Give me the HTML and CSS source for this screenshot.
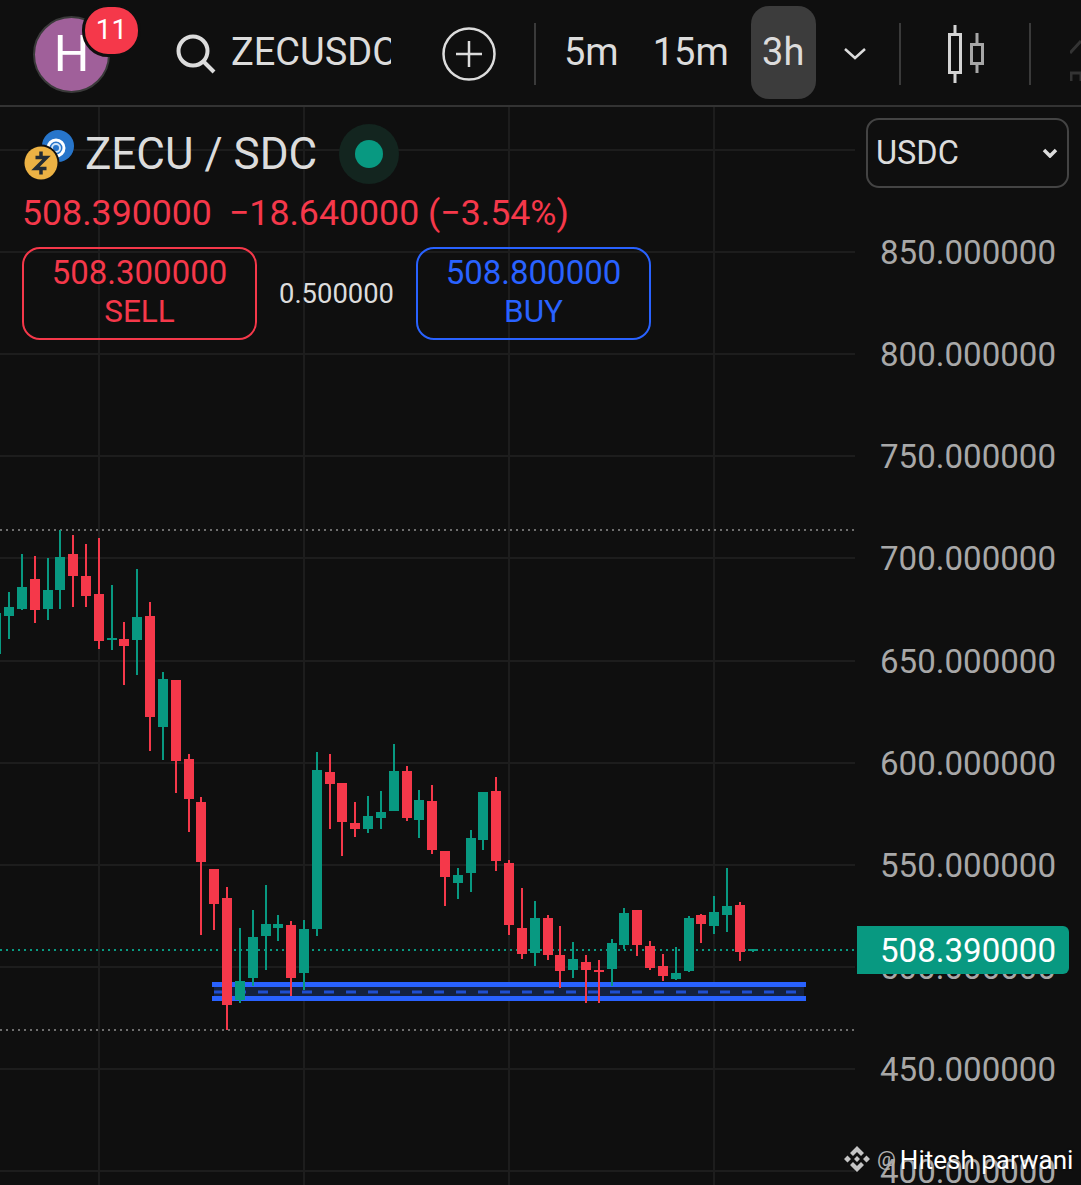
FILE: index.html
```html
<!DOCTYPE html>
<html lang="en">
<head>
<meta charset="utf-8">
<title>ZECU / SDC</title>
<link rel="stylesheet" href="styles.css">
</head>
<body>
<div class="page">
  <svg class="chart" width="1081" height="1185" viewBox="0 0 1081 1185" aria-hidden="true">
    <path class="grid" d="M0 150H855M0 252H855M0 354H855M0 456H855M0 558H855M0 661H855M0 763H855M0 865H855M0 967H855M0 1069H855M0 1171H855M99 107V1185M304 107V1185M509 107V1185M714 107V1185"/>
    <path class="dots-gray" d="M0 530H855M0 1030H855"/>
    <path class="dots-green" d="M0 950H296M312 950H680M696 950H857"/>
    <rect class="band-fill" x="214" y="984" width="590" height="15"/>
    <path class="band-line" d="M212 984.5H806M212 998.500H806"/>
    <path class="band-dash" d="M214 992H804"/>
    <path class="wick-red" d="M35 556V623M73 535V607M86 544V607M99 538V649M124 622V685M150 602V751M176 680V793M189 754V832M201 797V935M214 869V930M227 887V1030M291 921V996M330 754V829M342 783V856M355 802V837M407 766V821M432 785V854M445 851V906M496 777V871M509 860V935M522 888V959M548 915V960M560 926V988M586 955V1003M599 960V1003M637 910V956M650 941V970M663 954V981M701 914V943M740 902V961"/>
    <path class="body-red" d="M35 579V610M73 554V576M86 576V596M99 594V641M124 639V646M150 616V717M176 680V761M189 759V799M201 802V862M214 869V904M227 898V1005M291 925V978M330 772V784M342 783V822M355 823V829M407 771V818M432 801V850M445 851V877M496 791V861M509 863V925M522 928V954M548 918V955M560 955V971M586 962V970M599 970V972M637 910V945M650 946V968M663 966V976M701 915V924M740 905V952"/>
    <path class="wick-green" d="M0 613V654M9 592V639M22 554V610M48 558V620M60 530V609M112 585V650M137 569V675M163 672V760M240 928V1003M253 910V986M266 885V970M278 915V941M304 920V990M317 752V936M368 796V833M381 791V829M394 744V811M419 790V838M458 868V899M471 830V892M483 792V850M535 901V966M573 942V978M612 939V986M624 908V949M676 947V980M689 916V972M714 896V934M727 868V932M753 949V952"/>
    <path class="body-green" d="M9 607V616M22 587V609M48 590V609M60 557V590M112 638V640M137 617V640M163 679V727M240 981V1000M253 937V978M266 924V936M278 924V928M304 929V973M317 770V929M368 816V829M381 812V818M394 771V811M419 800V820M458 875V883M471 838V873M483 792V840M535 918V953M573 959V970M612 943V969M624 913V945M676 973V979M689 918V971M714 912V926M727 906V915M753 949V951"/>
  </svg>

  <header class="topbar">
    <div class="avatar">
      <span class="avatar-letter">H</span>
      <span class="badge">11</span>
    </div>
    <svg class="search-icon" width="42" height="42" viewBox="0 0 42 42">
      <circle cx="18" cy="18" r="14.5"/>
      <path d="M28.5 28.5L39 39"/>
    </svg>
    <div class="symbol-input">ZECUSDC</div>
    <svg class="plus-icon" width="54" height="54" viewBox="0 0 54 54">
      <circle cx="27" cy="27" r="25.5"/>
      <path d="M27 14V40M14 27H40"/>
    </svg>
    <span class="divider divider-first"></span>
    <span class="interval interval-5">5m</span>
    <span class="interval interval-15">15m</span>
    <span class="interval interval-active">3h</span>
    <svg class="chevron" width="24" height="14" viewBox="0 0 24 14">
      <path d="M2 2L12 11L22 2"/>
    </svg>
    <span class="divider divider-second"></span>
    <svg class="candle-icon" width="38" height="58" viewBox="0 0 38 58">
      <path class="candle-a" d="M7 0V9M7 48V58"/>
      <rect class="candle-a" x="1.500" y="9.500" width="11" height="38"/>
      <path class="candle-b" d="M29 8V19M29 39V48"/>
      <rect class="candle-b" x="23.500" y="19.500" width="11" height="19"/>
    </svg>
    <span class="divider divider-third"></span>
    <svg class="faint-icon" width="12" height="50" viewBox="0 0 12 50">
      <path d="M0 22L11 10M1 42H11V55H1Z"/>
    </svg>
  </header>

  <main class="main">
    <section class="info">
      <div class="title-row">
        <svg class="coins" width="52" height="52" viewBox="0 0 52 52">
          <circle class="coin-usdc" cx="34" cy="16" r="16"/>
          <circle class="coin-usdc-ring" cx="32" cy="18" r="8"/>
          <circle class="coin-usdc-inner" cx="32" cy="18" r="4"/>
          <circle class="coin-gap" cx="17" cy="33" r="18.500"/>
          <circle class="coin-zec" cx="17" cy="33" r="16.500"/>
          <path class="coin-zec-mark" d="M17 21.500V27M17 39V44.500M11.500 27.500H22.500L11.500 38.500H22.500"/>
        </svg>
        <h1 class="pair">ZECU / SDC</h1>
        <span class="status"><span class="status-dot"></span></span>
      </div>
      <div class="price-row">
        <span>508.390000</span>
        <span>−18.640000 (−3.54%)</span>
      </div>
      <div class="quote-row">
        <div class="quote quote-sell">
          <span class="quote-price">508.300000</span>
          <span class="quote-label">SELL</span>
        </div>
        <span class="spread">0.500000</span>
        <div class="quote quote-buy">
          <span class="quote-price">508.800000</span>
          <span class="quote-label">BUY</span>
        </div>
      </div>
    </section>

    <aside class="axis">
      <div class="currency">
        <span>USDC</span>
        <svg class="currency-chevron" width="16" height="10" viewBox="0 0 16 10">
          <path d="M2 2L8 8L14 2"/>
        </svg>
      </div>
      <ul class="scale">
        <li>850.000000</li>
        <li>800.000000</li>
        <li>750.000000</li>
        <li>700.000000</li>
        <li>650.000000</li>
        <li>600.000000</li>
        <li>550.000000</li>
        <li>500.000000</li>
        <li>450.000000</li>
        <li>400.000000</li>
      </ul>
    </aside>
  </main>

  <div class="price-tag">508.390000</div>

  <div class="watermark">
    <svg class="binance" width="28" height="28" viewBox="0 0 28 28">
      <path d="M14 1L21 8L18 11L14 7L10 11L7 8ZM14 27L7 20L10 17L14 21L18 17L21 20ZM4.500 10.500L8 14L4.500 17.500L1 14ZM23.500 10.500L27 14L23.500 17.500L20 14ZM14 11L17 14L14 17L11 14Z"/>
    </svg>
    <span class="wm-at">@</span>
    <span class="wm-name">Hitesh parwani</span>
  </div>
</div>
</body>
</html>
```
FILE: styles.css
```css
* { box-sizing: border-box; }
html, body { margin: 0; padding: 0; background: #0f0f0f; }
body { font-family: Roboto, "Liberation Sans", sans-serif; color: #dcdcdc; }

.page {
  position: relative;
  width: 1081px;
  height: 1185px;
  overflow: hidden;
  background: #0f0f0f;
}

/* chart canvas */
.chart { position: absolute; left: 0; top: 0; }
.chart path { fill: none; }
.grid { stroke: #1d1d1d; stroke-width: 2; }
.dots-gray { stroke: #6e6e6e; stroke-width: 2; stroke-dasharray: 2 4; }
.dots-green { stroke: #089981; stroke-width: 2; stroke-dasharray: 2 4; }
.band-fill { fill: #14213f; }
.band-line { stroke: #2962ff; stroke-width: 5; }
.band-dash { stroke: #1f4fd0; stroke-width: 3; stroke-dasharray: 10 12; }
.wick-red { stroke: #f5384a; stroke-width: 2; }
.body-red { stroke: #f5384a; stroke-width: 10; }
.wick-green { stroke: #089981; stroke-width: 2; }
.body-green { stroke: #089981; stroke-width: 10; }

/* top bar */
.topbar {
  position: relative;
  height: 107px;
  display: flex;
  align-items: center;
  padding-left: 33px;
  border-bottom: 2px solid #333;
  background: #0f0f0f;
}
.avatar {
  position: relative;
  flex: none;
  width: 77px;
  height: 77px;
  margin-top: 3px;
  border-radius: 50%;
  background: #a0609a;
  border: 2px solid #3a3a3a;
  display: flex;
  align-items: center;
  justify-content: center;
}
.avatar-letter { font-size: 50px; line-height: 1; color: #fff; }
.badge {
  position: absolute;
  left: 47px;
  top: -14px;
  width: 59px;
  height: 53px;
  border-radius: 26px;
  border: 3px solid #0f0f0f;
  background: #f5384a;
  color: #fff;
  font-size: 28px;
  line-height: 45px;
  text-align: center;
}
.search-icon { flex: none; margin-left: 65px; margin-top: 2px; }
.search-icon circle, .search-icon path { fill: none; stroke: #dcdcdc; stroke-width: 4; }
.symbol-input {
  flex: none;
  width: 160px;
  margin-left: 14px;
  margin-bottom: 2px;
  overflow: hidden;
  white-space: nowrap;
  font-size: 38px;
  color: #dcdcdc;
}
.plus-icon { flex: none; margin-left: 51px; margin-top: 3px; }
.plus-icon circle, .plus-icon path { fill: none; stroke: #dcdcdc; stroke-width: 2.5; }
.divider { flex: none; width: 2px; height: 62px; background: #3a3a3a; margin-top: 2px; }
.divider-first { margin-left: 38px; }
.interval { flex: none; margin-bottom: 2px; font-size: 38px; color: #dcdcdc; }
.interval-5 { margin-left: 28px; }
.interval-15 { margin-left: 34px; }
.interval-active {
  width: 65px;
  height: 93px;
  margin-left: 22px;
  margin-bottom: 0;
  border-radius: 18px;
  background: #3c3c3c;
  text-align: center;
  line-height: 93px;
}
.chevron { flex: none; margin-left: 27px; margin-top: 2px; }
.chevron path { fill: none; stroke: #dcdcdc; stroke-width: 2.5; }
.divider-second { margin-left: 32px; }
.candle-icon { flex: none; margin-left: 47px; margin-top: 2px; }
.candle-icon path, .candle-icon rect { fill: none; stroke-width: 3; }
.candle-icon .candle-a { stroke: #d4d4d4; }
.candle-icon .candle-b { stroke: #a6a6a6; }
.divider-third { margin-left: 43px; }
.faint-icon { flex: none; margin-left: 39px; margin-top: 6px; }
.faint-icon path { fill: none; stroke: #333; stroke-width: 3; }

/* main area */
.main {
  position: relative;
  display: flex;
  justify-content: space-between;
  height: 1078px;
}
.info { padding: 17px 0 0 24px; }
.title-row { display: flex; align-items: center; height: 60px; }
.coins { flex: none; margin-top: 4px; }
.coin-usdc { fill: #2775ca; }
.coin-usdc-ring { fill: none; stroke: #fff; stroke-width: 3; }
.coin-usdc-inner { fill: none; stroke: #cfe3f7; stroke-width: 2; }
.coin-gap { fill: #0f0f0f; }
.coin-zec { fill: #ecb244; }
.coin-zec-mark { fill: none; stroke: #232b33; stroke-width: 3.5; }
.pair {
  margin: 0 0 0 9px;
  font-size: 44px;
  font-weight: 400;
  color: #dcdcdc;
  line-height: 60px;
}
.status {
  width: 60px;
  height: 60px;
  margin-left: 22px;
  border-radius: 50%;
  background: #13251f;
  display: flex;
  align-items: center;
  justify-content: center;
}
.status-dot { width: 28px; height: 28px; border-radius: 50%; background: #089981; }
.price-row {
  display: flex;
  gap: 17px;
  margin: 8px 0 0 -2px;
  height: 42px;
  font-size: 35.7px;
  line-height: 42px;
  color: #f5384a;
  white-space: nowrap;
}
.quote-row {
  display: flex;
  align-items: center;
  margin: 13px 0 0 -2px;
}
.quote {
  display: flex;
  flex-direction: column;
  align-items: center;
  justify-content: center;
  width: 235px;
  height: 93px;
  padding-bottom: 4px;
  border-radius: 18px;
  border: 2px solid;
}
.quote-sell { color: #f5384a; }
.quote-buy { color: #2962ff; }
.quote-price { font-size: 33px; line-height: 40px; }
.quote-label { font-size: 31.5px; line-height: 38px; }
.spread { width: 159px; text-align: center; font-size: 27.4px; color: #dcdcdc; }

/* price axis */
.axis {
  flex: none;
  width: 215px;
  padding: 11px 12px 0 0;
}
.currency {
  display: flex;
  align-items: center;
  justify-content: space-between;
  height: 70px;
  padding: 0 9px 0 8px;
  border: 2px solid #444;
  border-radius: 13px;
  font-size: 32.5px;
  color: #dcdcdc;
}
.currency-chevron { flex: none; }
.currency-chevron path { fill: none; stroke: #dcdcdc; stroke-width: 3.5; }
.scale {
  list-style: none;
  margin: 14.2px 0 0;
  padding: 0 13px 0 0;
}
.scale li {
  height: 102.1px;
  line-height: 102.1px;
  text-align: right;
  font-size: 33.1px;
  color: #a8a8a8;
}

/* overlays */
.price-tag {
  position: absolute;
  left: 857px;
  top: 926px;
  width: 212px;
  height: 48px;
  padding-right: 13px;
  border-radius: 0 6px 6px 0;
  background: #089981;
  color: #fff;
  font-size: 33.1px;
  line-height: 50px;
  text-align: right;
}
.watermark {
  position: absolute;
  left: 843px;
  top: 1145px;
  display: flex;
  align-items: center;
  height: 28px;
  white-space: nowrap;
}
.binance { flex: none; }
.binance path { fill: #c4c4c4; }
.wm-at { margin-left: 6px; font-size: 21px; color: #b0b0b0; }
.wm-name { margin: 2px 0 0 4px; font-size: 26px; color: #fff; text-shadow: 0 0 2px rgba(0,0,0,.6); }
```
